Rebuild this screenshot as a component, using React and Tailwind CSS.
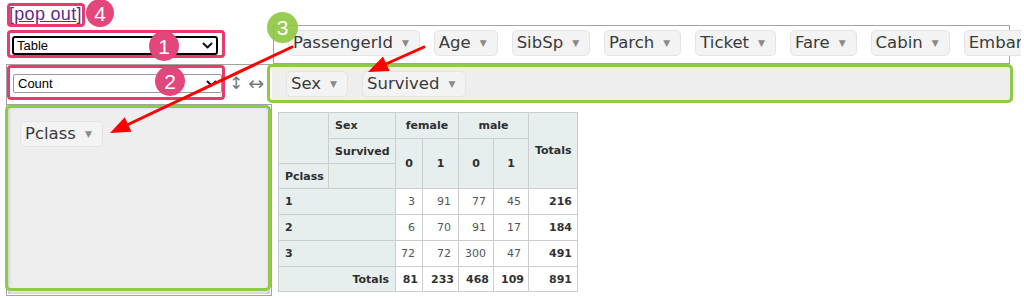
import React from 'react';

const unused = ['PassengerId', 'Age', 'SibSp', 'Parch', 'Ticket', 'Fare', 'Cabin', 'Embarked'];

const Chip = ({ name }) => (
  <div className="flex h-[26px] shrink-0 items-center rounded-[5px] border border-[#e4e4e4] bg-[#f3f3f3] pl-[4px] pr-[10px] text-[16.5px] leading-none text-[#3a3a3a] whitespace-nowrap">
    <span>{name}</span>
    <span className="ml-[9px] text-[9px] text-[#8a8a8a]">▼</span>
  </div>
);

const Chevron = () => (
  <svg width="11" height="7" viewBox="0 0 11 7" fill="none">
    <path d="M1.5 1.5l4 4 4-4" stroke="#111" strokeWidth="2" strokeLinecap="round" strokeLinejoin="round" />
  </svg>
);

const cell = 'border border-[#cdcdcd]';
const th = `${cell} bg-[#e6eeee] font-bold text-[#2e2e2e] px-[6px]`;
const thL = `${th} text-left`;
const thC = `${th} text-center`;
const thR = `${th} text-right`;
const td = `${cell} bg-white text-right pr-[7px] text-[#555]`;
const tot = `${cell} bg-white text-right pr-[5px] font-bold text-[#333]`;
const totRow = `${cell} bg-white text-right pr-[4px] font-bold text-[#333]`;

const rows = [
  ['1', 3, 91, 77, 45, 216],
  ['2', 6, 70, 91, 17, 184],
  ['3', 72, 72, 300, 47, 491],
];

const PivotTable = () => (
  <table className="w-[299px] table-fixed border-collapse text-[11px] leading-none font-['DejaVu_Sans',sans-serif]">
    <colgroup>
      <col className="w-[50px]" />
      <col className="w-[67px]" />
      <col className="w-[27px]" />
      <col className="w-[36px]" />
      <col className="w-[35px]" />
      <col className="w-[35px]" />
      <col className="w-[49px]" />
    </colgroup>
    <thead>
      <tr className="h-[26px]">
        <th className={thL} rowSpan={2}></th>
        <th className={thL}>Sex</th>
        <th className={thC} colSpan={2}>female</th>
        <th className={thC} colSpan={2}>male</th>
        <th className={thC} rowSpan={3}>Totals</th>
      </tr>
      <tr className="h-[25px]">
        <th className={thL}>Survived</th>
        <th className={thC} rowSpan={2}>0</th>
        <th className={thC} rowSpan={2}>1</th>
        <th className={thC} rowSpan={2}>0</th>
        <th className={thC} rowSpan={2}>1</th>
      </tr>
      <tr className="h-[25px]">
        <th className={thL}>Pclass</th>
        <th className={thL}></th>
      </tr>
    </thead>
    <tbody>
      {rows.map((r) => (
        <tr key={r[0]} className="h-[26px]">
          <th className={thL} colSpan={2}>{r[0]}</th>
          <td className={td}>{r[1]}</td>
          <td className={td}>{r[2]}</td>
          <td className={td}>{r[3]}</td>
          <td className={td}>{r[4]}</td>
          <td className={tot}>{r[5]}</td>
        </tr>
      ))}
      <tr className="h-[25px]">
        <th className={thR} colSpan={2}>Totals</th>
        <td className={totRow}>81</td>
        <td className={totRow}>233</td>
        <td className={totRow}>468</td>
        <td className={totRow}>109</td>
        <td className={tot}>891</td>
      </tr>
    </tbody>
  </table>
);

const Badge = ({ n, className }) => (
  <div className={`absolute flex items-center justify-center rounded-full text-white text-[21px] leading-none font-['Liberation_Sans',sans-serif] ${className}`}>
    {n}
  </div>
);

export default function App() {
  return (
    <div className="relative w-[1024px] h-[298px] overflow-hidden bg-white font-['DejaVu_Sans',sans-serif]">
      <div className="w-[1021px] h-full overflow-hidden">
        {/* pop out link */}
        <div className="h-[25px] pl-[9px] pt-[5px] text-[18px] tracking-[0.3px] leading-none text-[#5c2d91] font-['Liberation_Sans',sans-serif]">
          [<span className="underline">pop out</span>]
        </div>

        <div className="pl-[6px]">
          {/* renderer + unused attrs */}
          <div className="flex h-[39px]">
            <div className="w-[267px] shrink-0 pl-[6px] pt-[11px]">
              <div className="flex h-[19px] w-[206px] items-center justify-between rounded-[3px] border-2 border-black pl-[3px] pr-[3px] text-[13px] text-black font-['Liberation_Sans',sans-serif]">
                <span>Table</span>
                <Chevron />
              </div>
            </div>
            <div className="flex w-[737px] shrink-0 items-start gap-[14px] border border-[#a3a3a3] pl-[14px] pt-[4px]">
              {unused.map((a) => (
                <Chip key={a} name={a} />
              ))}
            </div>
          </div>

          {/* aggregator + column attrs */}
          <div className="flex h-[40px]">
            <div className="flex w-[266px] shrink-0 items-start border-l border-t border-[#a3a3a3] pl-[6px] pt-[9px]">
              <div className="flex h-[19px] w-[209px] items-center justify-between rounded-[2px] border border-[#9a9a9a] pl-[4px] pr-[4px] text-[13px] text-black font-['Liberation_Sans',sans-serif]">
                <span>Count</span>
                <Chevron />
              </div>
              <span className="ml-[7px] text-[17px] leading-[19px] text-[#777]">↕</span>
              <span className="ml-[5px] text-[19px] leading-[19px] text-[#777]">↔</span>
            </div>
            <div className="my-[2px] flex w-[740px] shrink-0 items-start gap-[14px] bg-[#eeeeee] pl-[14px] pt-[5px]">
              <Chip name="Sex" />
              <Chip name="Survived" />
            </div>
          </div>

          {/* row attrs + table */}
          <div className="flex">
            <div className="h-[192px] w-[266px] shrink-0 border border-[#a3a3a3] p-[1px]">
              <div className="h-full w-full bg-[#eeeeee] pl-[12px] pt-[15px] shadow-[inset_0_0_4px_rgba(0,0,0,0.25)]">
                <div className="flex">
                  <Chip name="Pclass" />
                </div>
              </div>
            </div>
            <div className="pl-[6px] pt-[8px]">
              <PivotTable />
            </div>
          </div>
        </div>
      </div>

      {/* annotations */}
      <div className="absolute left-[7px] top-[3px] h-[24px] w-[78px] rounded-[4px] border-[3px] border-[#ea3a6c]" />
      <div className="absolute left-[7px] top-[30px] h-[28px] w-[218px] rounded-[4px] border-[3px] border-[#ea3a6c]" />
      <div className="absolute left-[7px] top-[65px] h-[35px] w-[218px] rounded-[4px] border-[3px] border-[#ea3a6c]" />
      <div className="absolute left-[267px] top-[64px] h-[39px] w-[746px] rounded-[5px] border-[3px] border-[#8dcb45]" />
      <div className="absolute left-[5px] top-[105px] h-[186px] w-[266px] rounded-[5px] border-[3px] border-[#8dcb45]" />

      <svg className="absolute left-0 top-0" width="1024" height="298" viewBox="0 0 1024 298">
        <line x1="292" y1="47" x2="128" y2="124.5" stroke="#f00" strokeWidth="3" strokeLinecap="round" />
        <polygon points="110,133 124.7,117.3 131.5,131.7" fill="#f00" />
        <line x1="424" y1="47" x2="386" y2="64" stroke="#f00" strokeWidth="3" strokeLinecap="round" />
        <polygon points="368,72 383,56.5 389.6,71.1" fill="#f00" />
      </svg>

      <Badge n="4" className="left-[86px] top-[-1px] h-[28px] w-[28px] bg-[#e3467a]" />
      <Badge n="1" className="left-[149px] top-[31px] h-[30px] w-[30px] bg-[#e3467a]" />
      <Badge n="2" className="left-[155px] top-[66px] h-[30px] w-[30px] bg-[#e3467a]" />
      <Badge n="3" className="left-[267px] top-[12px] h-[31px] w-[31px] bg-[#8dc63f]/90" />
    </div>
  );
}
